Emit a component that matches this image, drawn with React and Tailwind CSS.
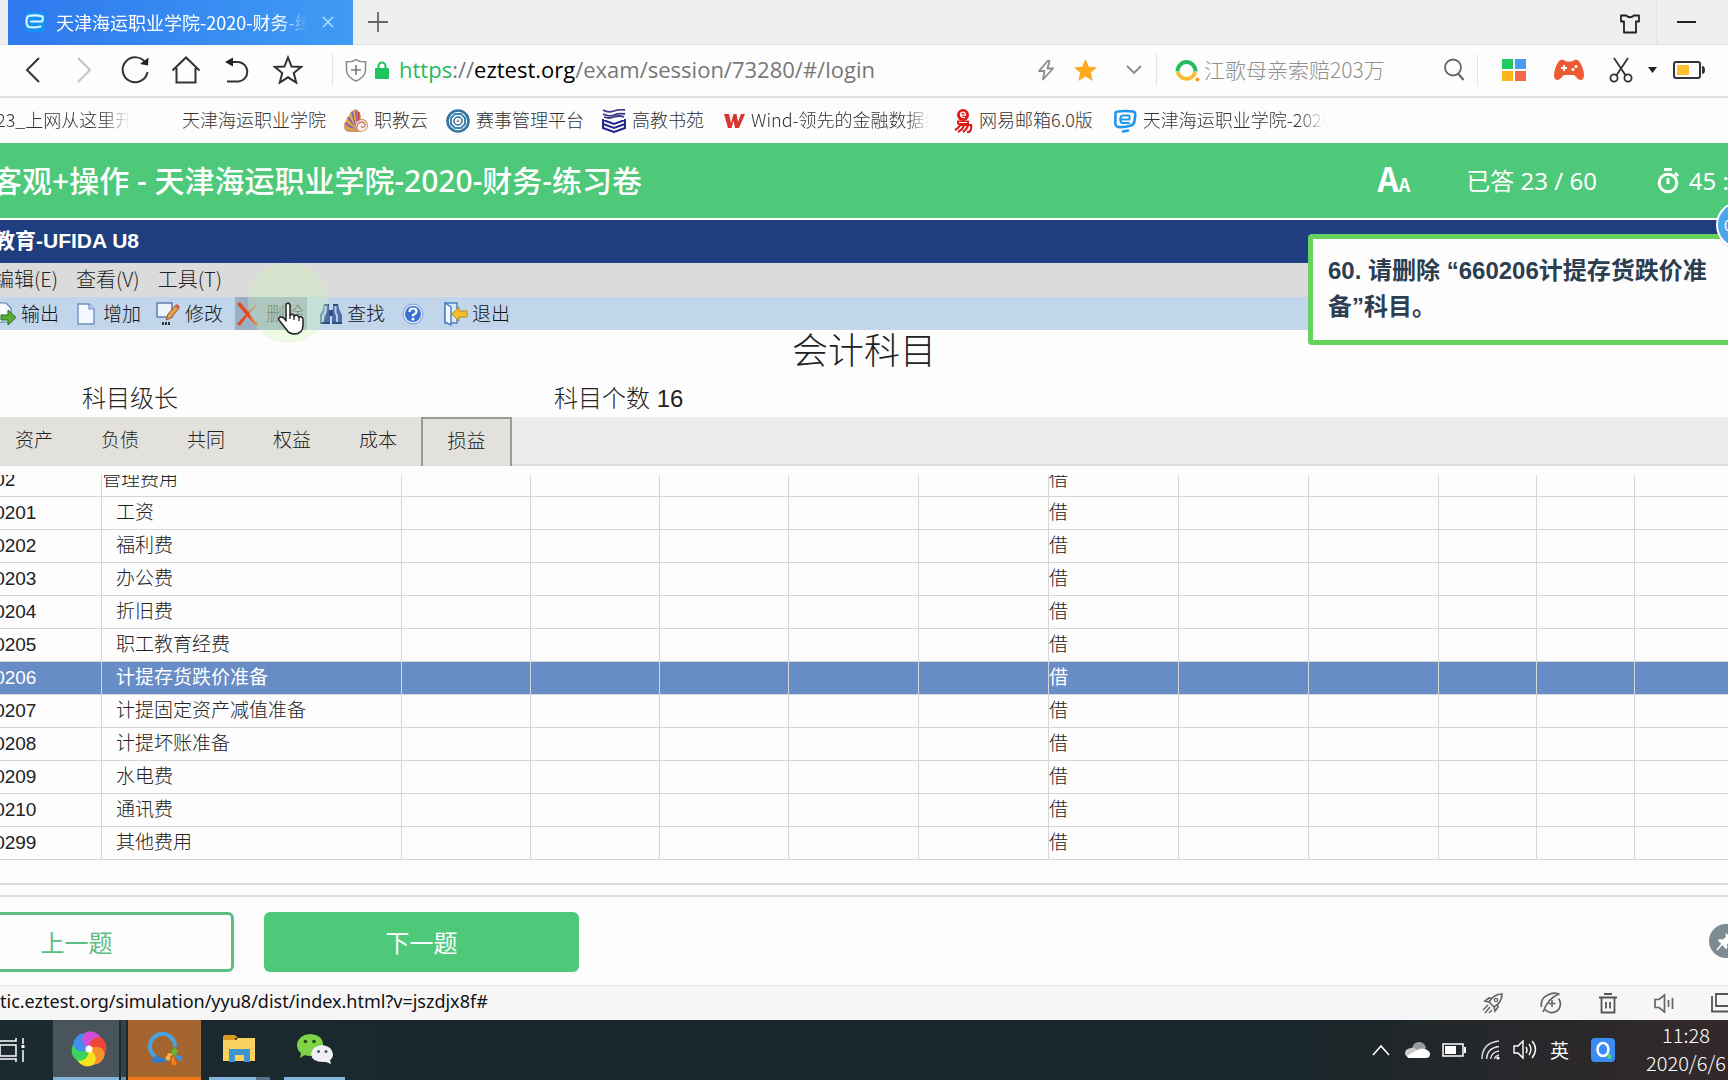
import React, { useState } from 'react';

const UI = "font-['Noto_Sans_CJK_SC',sans-serif]";
const ARIAL = "font-['Liberation_Sans','Noto_Sans_CJK_SC',sans-serif]";
const LATIN = "font-['Noto_Sans','Noto_Sans_CJK_SC',sans-serif]";
const OPEN = "font-['Open_Sans','Noto_Sans_CJK_SC',sans-serif]";

const ROWS = [
  { code: '6602', name: '管理费用', top: true },
  { code: '660201', name: '工资' },
  { code: '660202', name: '福利费' },
  { code: '660203', name: '办公费' },
  { code: '660204', name: '折旧费' },
  { code: '660205', name: '职工教育经费' },
  { code: '660206', name: '计提存货跌价准备' },
  { code: '660207', name: '计提固定资产减值准备' },
  { code: '660208', name: '计提坏账准备' },
  { code: '660209', name: '水电费' },
  { code: '660210', name: '通讯费' },
  { code: '660299', name: '其他费用' },
];

const TABS = ['资产', '负债', '共同', '权益', '成本', '损益'];

/* ---------- icons ---------- */

const Svg = ({ w, h, box, children, className = '' }) => (
  <svg
    width={w}
    height={h}
    viewBox={box || `0 0 ${w} ${h}`}
    fill="none"
    className={`shrink-0 ${className}`}
    aria-hidden="true"
  >
    {children}
  </svg>
);

const EzLogo = () => (
  <Svg w={24} h={24}>
    <path d="M2.500 5Q2 2.500 5 2.500Q12 1.500 20 2.500Q22.500 3 22.300 6L21.500 12Q21 15.500 18 16.500Q12 18.500 5 18Q2.500 17.500 2.300 14Z" stroke="#1e96ea" strokeWidth="2.600" strokeLinejoin="round" />
    <path d="M8 10.500h8.500Q17 8 16 6.500H9.500Q7.500 7 7.300 10T9 14h7" stroke="#1e96ea" strokeWidth="2" strokeLinecap="round" strokeLinejoin="round" />
    <path d="M10 22.500l5-1" stroke="#1e96ea" strokeWidth="2.600" strokeLinecap="round" />
  </Svg>
);

const TabLogo = () => (
  <Svg w={22} h={22}>
    <rect x="1" y="1" width="20" height="20" rx="4" fill="#1593f5" />
    <path d="M7 10.500h11Q19.500 8 18.500 5.500Q12 3.500 4.500 5Q2.500 6 2.500 10.500T5 16Q10 17 16.500 15.500" stroke="#d8f6ff" strokeWidth="2.200" strokeLinecap="round" strokeLinejoin="round" />
  </Svg>
);

const BackIcon = () => <Svg w={16} h={28}><path d="M14 2L2 14l12 12" stroke="#333" strokeWidth="2" /></Svg>;
const ForwardIcon = () => <Svg w={16} h={28}><path d="M2 2l12 12L2 26" stroke="#c4c4c4" strokeWidth="2" /></Svg>;
const ReloadIcon = () => (
  <Svg w={30} h={30}>
    <path d="M26 8.500A12.500 12.500 0 1 0 27.500 17" stroke="#333" strokeWidth="2" />
    <path d="M28.500 2.500l-.5 8-8-1.500z" fill="#222" />
  </Svg>
);
const HomeIcon = () => (
  <Svg w={30} h={30}>
    <path d="M1.500 15.500L15 2.500l13.500 13M5.500 13v14.500h19V13" stroke="#333" strokeWidth="2" />
  </Svg>
);
const UndoIcon = () => (
  <Svg w={28} h={28}>
    <path d="M5 6h10.500a9.800 9.800 0 0 1 0 19.500H4" stroke="#333" strokeWidth="2" />
    <path d="M2 6l8-4.500v9z" fill="#222" />
  </Svg>
);
const StarIcon = () => (
  <Svg w={30} h={30}>
    <path d="M15 2.500l3.600 9 9.400.5-7.200 6 2.400 9.500L15 22.300 6.800 27.500 9.200 18 2 12l9.400-.5z" stroke="#333" strokeWidth="2" />
  </Svg>
);
const ShieldIcon = () => (
  <Svg w={22} h={24}>
    <path d="M11 1.500Q14 4 20.500 3.800V13q-1 6.500-9.500 10Q2.500 19.500 1.500 13V3.800Q8 4 11 1.500z" stroke="#8a8a8a" strokeWidth="1.600" />
    <path d="M11 7v10M6 12h10" stroke="#777" strokeWidth="1.600" />
  </Svg>
);
const LockIcon = () => (
  <Svg w={14} h={18}>
    <path d="M3.500 8V5a3.500 3.500 0 0 1 7 0v3" stroke="#1ec45c" strokeWidth="2" />
    <rect x="0" y="7" width="14" height="11" rx="1" fill="#1ec45c" />
  </Svg>
);
const BoltIcon = () => <Svg w={18} h={22}><path d="M11 1.500L2 12h5.500L6 20.500 16 9.500h-5.500L12.500 2z" stroke="#8c8c8c" strokeWidth="1.800" strokeLinejoin="round" /></Svg>;
const GoldStar = () => <Svg w={23} h={22}><path d="M11.500 0l3.300 7.800 8.200.6-6.200 5.400 2 8.200-7.300-4.500L4.200 22l2-8.200L0 8.400l8.200-.6z" fill="#fbab1d" /></Svg>;
const SearchLogo = () => (
  <Svg w={25} h={24}>
    <path d="M2.500 13.500a9 9.500 0 1 1 18 0" stroke="#25bd60" strokeWidth="4" />
    <path d="M2.800 14a9 9 0 0 0 17.400 0" stroke="#f8bd33" strokeWidth="4" />
    <circle cx="22.500" cy="21.500" r="2" fill="#f59c1b" />
  </Svg>
);
const Magnifier = () => <Svg w={22} h={24}><circle cx="10" cy="9.500" r="8" stroke="#666" strokeWidth="1.800" /><path d="M15.500 16l5 6" stroke="#666" strokeWidth="2.200" /></Svg>;
const FourSquares = () => (
  <Svg w={24} h={24}>
    <path d="M0 1h11v10H0z" fill="#22c95f" /><path d="M13 1h11v10H13z" fill="#4a9df3" />
    <path d="M0 13h11v10H0z" fill="#fdb51b" /><path d="M13 13h11v10H13z" fill="#f4674a" />
  </Svg>
);
const GamepadIcon = () => (
  <Svg w={30} h={22}>
    <path d="M5 2Q9-1 11 2q4 1 8 0 2-3 6 0 5 7 5 15-1 6-6 3l-4-4H10l-4 4q-5 3-6-3Q0 9 5 2z" fill="#ee5a34" />
    <path d="M10 6v6M7 9h6" stroke="#fff" strokeWidth="1.800" />
    <circle cx="19" cy="10.500" r="1.500" fill="#fff" /><circle cx="22" cy="7.500" r="1.500" fill="#fff" />
  </Svg>
);
const ScissorsIcon = () => (
  <Svg w={24} h={26}>
    <path d="M5 1l12 18M19 1L7 19" stroke="#333" strokeWidth="1.800" />
    <circle cx="5" cy="21" r="3.600" stroke="#333" strokeWidth="1.800" /><circle cx="19" cy="21" r="3.600" stroke="#333" strokeWidth="1.800" />
  </Svg>
);
const BatteryIcon = () => (
  <Svg w={32} h={18}>
    <rect x="1" y="1" width="26" height="16" rx="2" stroke="#333" strokeWidth="2" />
    <rect x="4" y="4" width="12" height="10" fill="#fbc02d" />
    <path d="M29 5q3 0 3 4t-3 4z" fill="#333" />
  </Svg>
);
const ShirtIcon = () => <Svg w={20} h={20}><path d="M6 1.500Q10 5 14 1.500h5v6h-3V18.500H4V7.500H1v-6z" stroke="#222" strokeWidth="1.800" strokeLinejoin="round" /></Svg>;

const ShellIcon = () => (
  <Svg w={24} h={24}>
    <path d="M12 0q5 2 5 10 6-1 7 6 0 7-8 7H6q-6 0-6-6 0-3 2-5 0-3 3-5 1-4 3-5z" fill="#cf9466" />
    <path d="M12 2v12M8 3l3 12M4 8l6 8M1 14l8 5" stroke="#8a5fa8" strokeWidth="1.600" />
    <path d="M10 3l2 11M6 5l4 10M2 11l7 6M3 19l6 2" stroke="#e0b83a" strokeWidth="1.300" />
    <path d="M14.500 3v9" stroke="#c0392b" strokeWidth="1.600" />
    <circle cx="17.500" cy="16.500" r="5.500" fill="#faf0ea" />
    <path d="M13 21q-1-8 5-8 4 1 3 4-2 3-4 0" stroke="#c4756a" strokeWidth="1.300" />
  </Svg>
);
const RingIcon = () => (
  <Svg w={24} h={24}>
    <circle cx="12" cy="12" r="10.500" stroke="#34739f" strokeWidth="2.600" />
    <path d="M9 5h6l4 4v6l-4 4H9l-4-4V9z" stroke="#3c86b5" strokeWidth="2" />
    <circle cx="12" cy="12" r="4" stroke="#2f6c98" strokeWidth="1.500" />
    <path d="M12 10l2 3h-4z" fill="#b78f8a" />
  </Svg>
);
const BooksIcon = () => (
  <Svg w={24} h={24}>
    <path d="M1 1q5 3 11 1t11-1M1 5q6 3 11 1t11-1M2 8q5 2 10 0t10 0" stroke="#3d3a86" strokeWidth="1.800" />
    <path d="M1 11l11 4 11-4M1 15l11 4 11-4M1 19l11 4 11-4M1 10v10M23 10v10" stroke="#27278a" strokeWidth="2" />
  </Svg>
);
const WindIcon = () => <Svg w={21} h={16}><path d="M0 1h5l2 9 2.500-9h3l1.500 8 3-8h4l-6 14h-4l-1.500-7L7.500 15H4z" fill="#d8352c" /></Svg>;
const NeteaseIcon = () => (
  <Svg w={20} h={24}>
    <circle cx="10" cy="6" r="6" fill="#dd1a1a" />
    <path d="M7.500 6.200h5q0-3-2.500-3T7.500 6q0 2.800 4.500 2.500" stroke="#fff" strokeWidth="1.300" />
    <path d="M4 11.500h12v4H4z" fill="#dd1a1a" />
    <path d="M6 13.500h8" stroke="#fff" />
    <path d="M2 21q4-2 5-5h11q1 5-2 7h-2M11 17q-2 4-6 6M15 17q-2 4-5 6" stroke="#dd1a1a" strokeWidth="2.200" />
  </Svg>
);

const StopwatchIcon = () => (
  <Svg w={24} h={26}>
    <circle cx="11" cy="15" r="8.800" stroke="#fff" strokeWidth="3" />
    <path d="M7 1.500h8M11 10v6M18 5l3 3" stroke="#fff" strokeWidth="3" />
  </Svg>
);

const ExportIcon = () => (
  <Svg w={24} h={24}>
    <path d="M1 1h12l5 5v14H1z" fill="#f4f8ff" stroke="#5b7fb5" strokeWidth="1.200" />
    <path d="M8 13h7V8l8 7.500-8 7.500v-5H8z" fill="#55ad36" stroke="#2c6e1c" />
  </Svg>
);
const PageIcon = () => (
  <Svg w={18} h={22}>
    <path d="M1 1h11l5 5v15H1z" fill="#f3f8ff" stroke="#6f8fc5" strokeWidth="1.400" />
    <path d="M12 1v5h5" fill="#c7d9f3" stroke="#6f8fc5" strokeWidth="1.200" />
  </Svg>
);
const EditIcon = () => (
  <Svg w={24} h={24}>
    <path d="M1 1h15v14H1z" fill="#eef3fc" stroke="#5f7fb4" strokeWidth="1.500" />
    <path d="M10 18l2-6L20 3l3 3-8 10z" fill="#e8a050" stroke="#8a5a24" />
    <path d="M19 4l2-2 3 3-2 2z" fill="#d9534a" />
    <path d="M6 20h2v3H6zM9 20h2v3H9zM12 20h2v3h-2z" fill="#333" />
  </Svg>
);
const DeleteIcon = () => (
  <Svg w={24} h={26}>
    <path d="M1 3L4 1 13 12 22 24 20 25 11 15z" fill="#e8491c" />
    <path d="M22 2L11 12 1 23l3 2 8-11z" fill="#e8491c" />
  </Svg>
);
const BinocularsIcon = () => (
  <Svg w={24} h={24}>
    <path d="M5 2h5v5l1 4v11H1V13l3-6z" fill="#4a6ea8" />
    <path d="M14 2h5l1 5 3 6v9H13V11l1-4z" fill="#4a6ea8" />
    <path d="M10 8h4v6h-4z" fill="#2f4d80" />
    <path d="M6.500 4v6L4 14v6M16.500 4v6l1.500 4v6" stroke="#b9cdea" strokeWidth="2" />
    <path d="M5 2h5v2H5zM14 2h5v2h-5zM1 20h10v2H1zM13 20h10v2H13z" fill="#2f4d80" />
  </Svg>
);
const HelpIcon = () => (
  <Svg w={22} h={22}>
    <circle cx="11" cy="11" r="10" fill="#dbe7fa" stroke="#7f9fd6" />
    <circle cx="11" cy="11" r="8" fill="#3b72d1" />
    <path d="M7.500 9q0-3.500 3.500-3.500T14.500 8.500Q14.500 10.500 11 12v1.500" stroke="#fff" strokeWidth="2.200" />
    <circle cx="11" cy="16.200" r="1.400" fill="#fff" />
  </Svg>
);
const ExitIcon = () => (
  <Svg w={24} h={24}>
    <path d="M1 1h12v20H1z" fill="#dbe8fa" stroke="#4a7fc6" strokeWidth="1.500" />
    <path d="M1 1l6 4v18l-6-3z" fill="#f6faff" stroke="#4a7fc6" strokeWidth="1.500" />
    <path d="M8 12l7-7v4h8v6h-8v4z" fill="#f6c02c" stroke="#b98512" />
  </Svg>
);

const HandCursor = () => (
  <Svg w={27} h={33}>
    <path
      d="M9 2q3-2 4 1v10q3-2 4 1 3-2 5 1 3-1 4 2v6q0 9-9 9-5 0-8-5l-7-9q-1-3 2-3 3 0 5 4V4z"
      fill="#fff" stroke="#222" strokeWidth="1.500" strokeLinejoin="round"
    />
    <path d="M13 12v5M17 14v4M22 15v4" stroke="#222" strokeWidth="1.300" />
  </Svg>
);

const PinIcon = () => (
  <Svg w={20} h={20}>
    <path d="M10 2l8 8-2 1-2-.5-3 3 .5 3.500-1.500 1L2 9.500 3.500 8l3.500.5 3-3L9.500 3z" fill="#fff" />
    <path d="M6 13l-5 6" stroke="#fff" strokeWidth="1.600" />
  </Svg>
);

const RocketIcon = () => (
  <Svg w={21} h={21}>
    <path d="M7 9q5-8 13-8 0 8-8 13zM7 9l-4-1 4-3 3 .5M12 14l1 4 3-4-.5-3M7 9l5 5" stroke="#666" strokeWidth="1.700" />
    <circle cx="14" cy="7" r="1.600" stroke="#666" strokeWidth="1.300" />
    <path d="M6 12l-5 5M8 14l-5 6M10 17l-3 3" stroke="#666" strokeWidth="1.500" />
  </Svg>
);
const BoostIcon = () => (
  <Svg w={22} h={22}>
    <path d="M18.500 6.500a8.500 8.500 0 1 1-13.500 11M1.500 15Q0 6 8 3q5-3 11-1Q8 6 3 20" stroke="#666" strokeWidth="1.700" strokeLinejoin="round" />
    <path d="M12 8v7M8.500 11.500h7" stroke="#666" strokeWidth="1.600" />
  </Svg>
);
const TrashIcon = () => (
  <Svg w={18} h={21}>
    <path d="M5 1h8M0 4.500h18M2.500 5v14.500h13V5M7 9v6.500M11 9v6.500" stroke="#555" strokeWidth="1.800" />
  </Svg>
);
const SoundIcon = () => (
  <Svg w={20} h={21}>
    <path d="M1 6.500h4L10.500 2v17L5 14.500H1zM14.500 7v7M18.500 5v11" stroke="#666" strokeWidth="1.700" />
  </Svg>
);
const WindowsIcon = () => (
  <Svg w={22} h={20}>
    <path d="M1 3v15.500h20M5 1h16v12H5z" stroke="#555" strokeWidth="1.800" />
  </Svg>
);

const TaskViewIcon = () => (
  <Svg w={26} h={24}>
    <path d="M0 7h16v11H0zM0 4V3h16V0M0 21h16v3M23 0v6M23 12v12" stroke="#fff" strokeWidth="1.500" />
    <path d="M21.500 7h3v3h-3z" fill="#fff" />
  </Svg>
);

const PETALS = ['#d14fd8', '#f2453a', '#f5902a', '#f7e31c', '#3bd45a', '#3f8ff0'];

const FlowerIcon = () => (
  <Svg w={36} h={36} box="-18 -18 36 36">
    {PETALS.map((color, i) => (
      <path key={color} d="M0 0Q-12-5-7-15Q2-21 10-13Q4-12 0 0Z" fill={color} transform={`rotate(${i * 60 + 10})`} />
    ))}
    {/* left half of the first petal sits above the last one */}
    <path d="M0 0Q-12-5-7-15Q-4-18 0-17.500Q-5-8 0 0Z" fill="#d14fd8" transform="rotate(10)" />
    <circle r="3.500" fill="#fff" />
  </Svg>
);
const QBrowserIcon = () => (
  <Svg w={36} h={34}>
    <path d="M9 25A12.500 12.500 0 1 1 28 15" stroke="#4aa3e0" strokeWidth="4" />
    <path d="M4 30l5-7q4 4 10 3l1 3q-8 3-16 1z" fill="#2f7fd0" />
    <path d="M27 22v-7l4 5z" fill="#6cc644" /><path d="M27 22l8 3-4 3z" fill="#3a9be0" />
    <path d="M27 22l1 11-4-4z" fill="#f28a22" /><path d="M27 22l-8 5 2-6z" fill="#f5b73d" />
    <circle cx="27" cy="20" r="3" fill="#5cb82e" /><circle cx="33" cy="26" r="2.500" fill="#3a8fe0" />
    <circle cx="27" cy="31" r="2.500" fill="#f07c1c" /><circle cx="21" cy="26" r="2.500" fill="#f5b73d" />
  </Svg>
);
const FolderIcon = () => (
  <Svg w={32} h={27}>
    <path d="M0 2q0-2 2-2h10l3 3h-3v4H0z" fill="#d99a22" />
    <path d="M0 5h13l2-2h17v23H0z" fill="#fbd25f" />
    <path d="M6 27V14h21v13h-6v-7h-9v7z" fill="#3f93d3" />
  </Svg>
);
const WechatIcon = () => (
  <Svg w={36} h={30}>
    <path d="M13 0q13 1 13 11-1 11-13 11-3 0-5-1l-5 3 1-5Q0 16 0 11 1 1 13 0z" fill="#7ed348" />
    <circle cx="8.500" cy="7.500" r="1.800" fill="#264d18" /><circle cx="17" cy="7.500" r="1.800" fill="#264d18" />
    <path d="M25 11q10 1 11 9 0 4-3 6l1 4-5-2q-14 1-15-8 1-8 11-9z" fill="#f0f1f4" />
    <circle cx="21.500" cy="17.500" r="1.500" fill="#555" /><circle cx="29" cy="17.500" r="1.500" fill="#555" />
  </Svg>
);

const CloudIcon = () => (
  <Svg w={25} h={18}>
    <path d="M7 7q2-7 8-6 5 1 6 6l-7 6z" fill="#9b9b9b" />
    <path d="M5 16q-5 0-5-4t6-5q4-1 7 3z" fill="#ccc" />
    <path d="M2 15l12-7q3-1 6 0 5 2 5 5 0 4-4 4H5q-3 0-3-2z" fill="#fff" />
  </Svg>
);
const TrayBattery = () => (
  <Svg w={24} h={14}>
    <path d="M1 1h20v12H1z" stroke="#fff" strokeWidth="1.500" /><path d="M3 3h11v8H3zM22 4h2v6h-2z" fill="#fff" />
  </Svg>
);
const WifiIcon = () => (
  <Svg w={19} h={20}>
    <path d="M1 19Q1 3 18 1M5.500 19Q6 8 18 6.500M9.500 19q1-7 8.500-8M13.500 19q.5-3 4.500-4" stroke="#ddd" strokeWidth="1.400" />
    <circle cx="17" cy="18" r="1.600" fill="#fff" />
  </Svg>
);
const TraySound = () => (
  <Svg w={24} h={20}>
    <path d="M1 6h4l5-5v17l-5-5H1zM13 7q2 3 0 6M16 4q4 5 0 11M19 1q7 8 0 17" stroke="#fff" strokeWidth="1.400" />
  </Svg>
);
const TrayQ = () => (
  <Svg w={24} h={24}>
    <rect width="24" height="24" rx="4" fill="#3b8bf5" />
    <ellipse cx="12" cy="11.500" rx="5.500" ry="6.500" stroke="#fff" strokeWidth="2.600" />
    <circle cx="18.500" cy="18.500" r="2.200" fill="#4be07a" />
  </Svg>
);

/* ---------- browser chrome ---------- */

const TitleBar = () => (
  <div className="flex h-[45px] items-center border-b border-[#dcdcdc] bg-[#efefef] pl-2">
    <div className="flex h-[45px] w-[345px] shrink-0 items-center bg-linear-to-r from-[#2f78ee] to-[#3f9bf4] pl-4 text-white">
      <TabLogo />
      <span className="ml-2.5 w-[252px] overflow-hidden whitespace-nowrap text-[18px] mask-r-from-88% mask-r-to-100%">
        天津海运职业学院-2020-财务-练习卷
      </span>
      <button aria-label="关闭标签" className="ml-3.5">
        <Svg w={12} h={12}><path d="M1 1l10 10M11 1L1 11" stroke="#b9dcff" strokeWidth="1.500" /></Svg>
      </button>
    </div>
    <button aria-label="新标签" className="ml-[15px]">
      <Svg w={20} h={20}><path d="M10 0v20M0 10h20" stroke="#666" strokeWidth="1.800" /></Svg>
    </button>
    <div className="ml-auto flex h-full items-center">
      <button aria-label="皮肤" className="mt-1 mr-4"><ShirtIcon /></button>
      <div className="h-full w-px bg-[#e2e2e2]" />
      <button aria-label="最小化" className="mr-8 ml-5">
        <Svg w={19} h={4}><path d="M0 2h19" stroke="#222" strokeWidth="2" /></Svg>
      </button>
    </div>
  </div>
);

const NAV = [
  ['后退', BackIcon],
  ['前进', ForwardIcon],
  ['刷新', ReloadIcon],
  ['主页', HomeIcon],
  ['恢复', UndoIcon],
  ['收藏', StarIcon],
];

const Divider = () => <div className="h-8 w-px shrink-0 bg-[#e4e4e4]" />;

const AddressBar = () => (
  <div className="flex h-[53px] items-center border-b-2 border-[#e2e2e4] bg-[#fdfdfd] pb-px pl-[7px]">
    {NAV.map(([label, Icon]) => (
      <button key={label} aria-label={label} className="flex w-[51px] shrink-0 justify-center">
        <Icon />
      </button>
    ))}
    <div className="ml-[19px]"><Divider /></div>
    <div className="ml-3 flex min-w-0 flex-1 items-center">
      <ShieldIcon />
      <span className="mx-2"><LockIcon /></span>
      <div role="textbox" aria-label="地址" className={`${OPEN} flex-1 whitespace-nowrap pb-0.5 pl-0.5 text-[22px] leading-8 text-[#777]`}>
        <span className="text-[#27b863]">https</span>://<span className="text-black">eztest.org</span>/exam/session/73280/#/login
      </div>
      <button aria-label="加速"><BoltIcon /></button>
      <button aria-label="已收藏" className="mx-[19px]"><GoldStar /></button>
      <button aria-label="更多地址" className="mx-2.5">
        <Svg w={16} h={10}><path d="M1 1l7 7 7-7" stroke="#8a8a8a" strokeWidth="1.800" /></Svg>
      </button>
    </div>
    <div className="ml-1"><Divider /></div>
    <label className="ml-[18px] flex items-center gap-1">
      <SearchLogo />
      <input
        type="text"
        aria-label="搜索"
        placeholder="江歌母亲索赔203万"
        className="w-[239px] bg-transparent pb-0.5 text-[21px] leading-8 font-light outline-none placeholder:text-[#8f8f8f]"
      />
    </label>
    <button aria-label="开始搜索"><Magnifier /></button>
    <div className="ml-3"><Divider /></div>
    <button aria-label="应用" className="ml-6"><FourSquares /></button>
    <button aria-label="游戏" className="ml-7"><GamepadIcon /></button>
    <button aria-label="截图" className="ml-[25px]"><ScissorsIcon /></button>
    <button aria-label="截图选项" className="ml-[15px]">
      <Svg w={9} h={6}><path d="M0 0h9L4.500 6z" fill="#222" /></Svg>
    </button>
    <button aria-label="省电" className="mr-[23px] ml-4"><BatteryIcon /></button>
  </div>
);

const Bookmark = ({ icon, label, className = '', text = '' }) => (
  <a href="#" className={`flex shrink-0 items-center gap-[6px] whitespace-nowrap ${className}`}>
    {icon}
    <span className={`overflow-hidden pb-[3px] ${text}`}>{label}</span>
  </a>
);

const Bookmarks = () => (
  <nav className="flex h-[45px] items-center bg-[#fdfdfd] text-[18px] font-light text-[#333]">
    <Bookmark label="23_上网从这里开始" className="-ml-1" text="w-[134px] mask-r-from-80% mask-r-to-100%" />
    <Bookmark label="天津海运职业学院" className="ml-[52px]" />
    <Bookmark icon={<ShellIcon />} label="职教云" className="ml-[18px]" />
    <Bookmark icon={<RingIcon />} label="赛事管理平台" className="ml-[18px]" />
    <Bookmark icon={<BooksIcon />} label="高教书苑" className="ml-[18px]" />
    <Bookmark icon={<WindIcon />} label="Wind-领先的金融数据终端" className="ml-[20px]" text="w-[178px] mask-r-from-88% mask-r-to-100%" />
    <Bookmark icon={<NeteaseIcon />} label="网易邮箱6.0版" className="ml-[24px]" />
    <Bookmark icon={<EzLogo />} label="天津海运职业学院-2020-财务" className="ml-[20px]" text="w-[182px] mask-r-from-85% mask-r-to-100%" />
  </nav>
);

/* ---------- exam page ---------- */

const ExamHeader = () => (
  <header className={`${LATIN} flex h-[75px] items-center bg-[#4dc979] text-white`}>
    <h1 className="-ml-[8px] text-[30px] font-medium whitespace-nowrap">客观+操作 - 天津海运职业学院-2020-财务-练习卷</h1>
    <button aria-label="字号" className={`${UI} ml-auto flex items-baseline font-bold`}>
      <span className="text-[33px] leading-10">A</span>
      <span className="text-[18px] leading-10">A</span>
    </button>
    <span className="ml-[56px] text-[24px]">已答 23 / 60</span>
    <span className="-mr-px ml-[60px] flex items-center gap-2 text-[24px] whitespace-nowrap">
      <StopwatchIcon />
      <span>45 :</span>
    </span>
  </header>
);

const ToolButton = ({ icon, label, className = '' }) => (
  <button className={`flex h-full shrink-0 items-center ${className}`}>
    {icon}
    <span className="pb-px">{label}</span>
  </button>
);

const Toolbar = () => (
  <div className="flex h-[33px] items-center bg-[#c2d6eb] text-[19px] font-light whitespace-nowrap text-[#111]">
    <ToolButton icon={<ExportIcon />} label="输出" className="-ml-[7px] gap-1" />
    <ToolButton icon={<PageIcon />} label="增加" className="ml-[18px] gap-2" />
    <ToolButton icon={<EditIcon />} label="修改" className="ml-[15px] gap-[5px]" />
    <ToolButton icon={<DeleteIcon />} label="删除" className="ml-[12px] w-[72px] gap-[6px] bg-[#9cb0c4] pl-px text-[#555]" />
    <ToolButton icon={<BinocularsIcon />} label="查找" className="ml-3 gap-1" />
    <button aria-label="帮助" className="ml-[17px]"><HelpIcon /></button>
    <ToolButton icon={<ExitIcon />} label="退出" className="ml-5 gap-1" />
  </div>
);

const SubjectTabs = ({ active, onChange }) => (
  <div role="tablist" className="flex h-[49px] border-b-2 border-[#dcdcdc] bg-[#ececec] text-[19px] font-light text-[#222]">
    <div className="-mb-0.5 -ml-[9px] flex bg-[#e2e1db]">
      {TABS.map((tab) => (
        <button
          key={tab}
          role="tab"
          aria-selected={tab === active}
          onClick={() => onChange(tab)}
          className={
            tab === active
              ? 'w-[91px] border-x-2 border-t-2 border-[#999] pb-1'
              : 'w-[86px] pb-1'
          }
        >
          {tab}
        </button>
      ))}
    </div>
  </div>
);

const COLS = ['w-[130px]', 'w-[300px]', 'w-[129px]', 'w-[129px]', 'w-[129px]', 'w-[130px]', 'w-[130px]', 'w-[130px]', 'w-[130px]', 'w-[130px]', 'w-[98px]', 'w-[98px]', ''];

const SubjectTable = ({ selected, onSelect }) => (
  <div className="mt-[9px] overflow-hidden">
    <table className={`${ARIAL} -mt-[11px] -ml-7 w-[calc(100%+28px)] table-fixed border-separate border-spacing-0 text-[19px] font-light text-[#222]`}>
      <colgroup>
        {COLS.map((w, i) => <col key={i} className={w} />)}
      </colgroup>
      <tbody>
        {ROWS.map((row) => (
          <tr
            key={row.code}
            onClick={() => onSelect(row.code)}
            className={row.code === selected ? 'bg-[#688cc5] font-normal text-white' : ''}
          >
            {COLS.map((_, i) => (
              <td key={i} className={`h-[33px] border-b border-[#d6d6d6] leading-8 whitespace-nowrap ${i < COLS.length - 1 ? 'border-r' : ''}`}>
                {i === 0 && <span className="pl-px">{row.code}</span>}
                {i === 1 && <span className={row.top ? '' : 'pl-3.5'}>{row.name}</span>}
                {i === 7 && '借'}
              </td>
            ))}
          </tr>
        ))}
      </tbody>
    </table>
  </div>
);

const StatusBar = () => (
  <footer className="flex h-[35px] items-center border-t border-[#e6e6e6] bg-[#f6f6f7]">
    <span className={`${LATIN} pb-1 text-[18px] whitespace-nowrap text-[#111]`}>
      tic.eztest.org/simulation/yyu8/dist/index.html?v=jszdjx8f#
    </span>
    <div className="-mr-[5px] ml-auto flex items-center gap-[37px]">
      <button aria-label="加速器"><RocketIcon /></button>
      <button aria-label="优化"><BoostIcon /></button>
      <button aria-label="清理"><TrashIcon /></button>
      <button aria-label="声音"><SoundIcon /></button>
      <button aria-label="窗口"><WindowsIcon /></button>
    </div>
  </footer>
);

const Taskbar = () => (
  <div className="flex h-[60px] items-center bg-linear-to-r from-[#1b2a30] via-[#19262a] via-75% to-[#33292b] text-white">
    <button aria-label="任务视图" className="w-[53px]"><TaskViewIcon /></button>
    <button aria-label="浏览器" className="flex h-full w-[66px] items-center justify-center border-b-3 border-[#82b4dc] bg-[#49555a] pl-1.5"><FlowerIcon /></button>
    <div className="ml-0.5 h-full w-[5px] border-b-3 border-[#6a93b4] bg-[#36444a]" />
    <button aria-label="QQ浏览器" className="ml-0.5 flex h-full w-[73px] items-center justify-center border-b-3 border-[#f07818] bg-[#a5652e]"><QBrowserIcon /></button>
    <button aria-label="文件夹" className="ml-2 flex h-full w-[47px] items-center justify-end border-b-3 border-[#82b4dc] pr-px"><FolderIcon /></button>
    <div className="h-full w-3.5 border-b-3 border-[#55728a]" />
    <button aria-label="微信" className="ml-3.5 flex h-full w-[61px] items-center justify-end border-b-3 border-[#82b4dc] pr-3"><WechatIcon /></button>

    <div className="ml-auto flex items-center">
      <button aria-label="展开托盘">
        <Svg w={18} h={12}><path d="M1 11l8-9 8 9" stroke="#fff" strokeWidth="1.500" /></Svg>
      </button>
      <span className="ml-[15px]"><CloudIcon /></span>
      <span className="ml-3"><TrayBattery /></span>
      <span className="ml-[15px]"><WifiIcon /></span>
      <span className="ml-[13px]"><TraySound /></span>
      <span className="ml-[13px] text-[19px]">英</span>
      <span className="mr-[31px] ml-[22px]"><TrayQ /></span>
      <div className="pr-0.5 pb-0.5 text-center text-[20px] leading-7 font-light">
        <div>11:28</div>
        <div>2020/6/6</div>
      </div>
    </div>
  </div>
);

export default function App() {
  const [tab, setTab] = useState('损益');
  const [selected, setSelected] = useState('660206');

  return (
    <div className={`${UI} flex min-h-screen flex-col overflow-hidden bg-[#fdfdfd]`}>
      <TitleBar />
      <AddressBar />
      <Bookmarks />
      <ExamHeader />

      <main className="relative mt-0.5 flex-1">
        <div className={`${ARIAL} flex h-[43px] items-center bg-[#1f3e80] pb-0.5 text-[21px] font-bold text-white`}>
          <span className="-ml-[6px] whitespace-nowrap">教育-UFIDA U8</span>
        </div>
        <div className="flex h-[34px] items-center gap-[18px] bg-[#dbdbdb] pb-[3px] text-[20px] font-light whitespace-nowrap text-[#222]">
          <button className="-ml-[6px]">编辑(E)</button>
          <button>查看(V)</button>
          <button>工具(T)</button>
        </div>
        <Toolbar />
        <h2 className="text-center text-[36px] leading-9 font-light text-[#222]">会计科目</h2>
        <div className={`${ARIAL} mt-[15px] flex pl-[82px] text-[24px] leading-9 font-light text-[#222]`}>
          <span className="w-[472px]">科目级长</span>
          <span>科目个数 16</span>
        </div>
        <SubjectTabs active={tab} onChange={setTab} />
        <SubjectTable selected={selected} onSelect={setSelected} />
        <div className="mt-[23px] h-3.5 border-y-2 border-[#dedede]" />
        <div className="flex gap-[30px] pt-[15px] pb-[13px] text-[24px]">
          <button className="-ml-[81px] h-[60px] w-[315px] rounded-md border-3 border-[#5cbd85] text-[#5cbd85]">上一题</button>
          <button className="h-[60px] w-[315px] rounded-md bg-[#4dc979] text-white">下一题</button>
        </div>

        {/* question card floats over the simulated window */}
        <div className={`${ARIAL} absolute top-3.5 -right-5 h-[111px] w-[440px] rounded border-5 border-[#66d45c] bg-[#fdfdfd] pt-3.5 pr-[30px] pl-[15px] text-[24px] leading-9 font-bold text-[#2c3e50]`}>
          60. 请删除 “660206计提存货跌价准备”科目。
        </div>
        <div className="absolute top-[-19px] -right-9 flex size-12 items-center rounded-full border-2 border-white bg-[#4aa6ec] pl-1.5 text-[15px] text-white shadow">
          <span>0</span>
        </div>
        <div className="absolute right-[-15px] bottom-[27px] flex size-[34px] items-center justify-center rounded-full bg-[#7d8b92]">
          <PinIcon />
        </div>
        <div className="pointer-events-none absolute top-[43px] left-[248px] size-20 rounded-full bg-[#cdf5b5]/35" />
        <div className="pointer-events-none absolute top-[82px] left-[277px]"><HandCursor /></div>
      </main>

      <StatusBar />
      <Taskbar />
    </div>
  );
}
